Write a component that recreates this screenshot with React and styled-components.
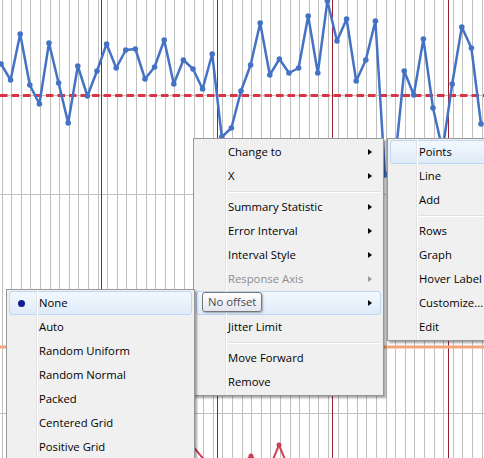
import React from "react";
import styled, { createGlobalStyle, css } from "styled-components";

const GlobalStyle = createGlobalStyle`
  html, body {
    margin: 0;
    padding: 0;
    background: #fff;
  }
  body {
    font-family: "Open Sans", "Liberation Sans", sans-serif;
  }
`;

const Screen = styled.div`
  position: relative;
  width: 484px;
  height: 458px;
  overflow: hidden;
  background: #fff;
`;

const Plot = styled.svg`
  display: block;
`;

const Popup = styled.div`
  position: absolute;
  left: ${(p) => p.$left}px;
  top: ${(p) => p.$top}px;
  width: ${(p) => p.$width}px;
  box-sizing: border-box;
  padding: 1px 2px;
  background: #f0f0f0;
  border: 1px solid #979797;
  box-shadow: 2px 2px 2px rgba(0, 0, 0, 0.35);
  font-size: 11.3px;
  color: #000;

  &::before {
    content: "";
    position: absolute;
    top: 0;
    bottom: 0;
    left: ${(p) => p.$gutter - 1}px;
    width: 1px;
    background: #e2e3e3;
    border-right: 1px solid #fff;
  }
`;

const Item = styled.div`
  display: flex;
  align-items: center;
  height: 24px;
  box-sizing: border-box;
  border: 1px solid transparent;
  border-radius: 3px;
  color: ${(p) => (p.$disabled ? "#8d8d8d" : "#000")};
  ${(p) =>
    p.$active &&
    css`
      border-color: #bcd8f6;
      background: linear-gradient(#f3f8fe, #dfebf9);
    `}
`;

const Gutter = styled.span`
  flex: 0 0 ${(p) => p.$w}px;
  display: flex;
  align-items: center;
  justify-content: center;
  padding-right: 4px;
  box-sizing: border-box;
`;

const Bullet = styled.span`
  width: 7px;
  height: 7px;
  border-radius: 50%;
  background: #101c8f;
`;

const Label = styled.span`
  flex: 1;
  padding-left: 3px;
  padding-bottom: 1px;
  white-space: nowrap;
`;

const Arrow = styled.span`
  width: 0;
  height: 0;
  margin-right: 8px;
  border-left: 4px solid ${(p) => (p.$disabled ? "#9a9a9a" : "#000")};
  border-top: 3.5px solid transparent;
  border-bottom: 3.5px solid transparent;
`;

const Separator = styled.div`
  height: 7px;
  margin-left: ${(p) => p.$gutter - 1}px;
  background: linear-gradient(
    transparent 3px,
    #e0e0e0 3px,
    #e0e0e0 4px,
    #fff 4px,
    #fff 5px,
    transparent 5px
  );
`;

const Tooltip = styled.div`
  position: absolute;
  left: 202px;
  top: 292px;
  height: 20px;
  box-sizing: border-box;
  padding: 0 5px 1px;
  display: flex;
  align-items: center;
  border: 1px solid #767676;
  border-radius: 3px;
  background: linear-gradient(#ffffff, #e4e5f0);
  box-shadow: 1px 1px 2px rgba(0, 0, 0, 0.3);
  color: #4c4c4c;
  font-size: 11.3px;
  white-space: nowrap;
`;

function Menu({ left, top, width, gutter, items }) {
  return (
    <Popup $left={left} $top={top} $width={width} $gutter={gutter}>
      {items.map((it, i) =>
        it === "-" ? (
          <Separator key={i} $gutter={gutter} />
        ) : (
          <Item key={i} $active={it.active} $disabled={it.disabled}>
            <Gutter $w={gutter - 4}>{it.bullet && <Bullet />}</Gutter>
            <Label>{it.label}</Label>
            {it.arrow && <Arrow $disabled={it.disabled} />}
          </Item>
        )
      )}
    </Popup>
  );
}

const STEP = 9.6;
const blueY = [
  64, 80, 34, 85, 104, 43, 83, 123, 66, 96, 71, 44, 68, 50, 49, 79, 67, 40, 84,
  60, 69, 89, 54, 137, 128, 91, 65, 23, 75, 59, 73, 68, 16, 73, 1, 41, 19, 81,
  60, 21, 175, 165, 71, 95, 39, 108, 150, 84, 27, 48, 124,
];
const blue = blueY.map((y, k) => [1 + STEP * k, y]);
const gridX = Array.from({ length: 51 }, (_, k) => Math.round(1.5 + STEP * k) + 0.5);
const redX = [101.5, 217.5, 332.5, 448.5];

function Chart() {
  return (
    <Plot width="484" height="458" viewBox="0 0 484 458">
      <g stroke="#c0c0c0" strokeWidth="1" shapeRendering="crispEdges">
        {gridX.map((x) => (
          <line key={x} x1={x} y1="0" x2={x} y2="458" />
        ))}
        <line x1="0" y1="95.5" x2="484" y2="95.5" />
        <line x1="0" y1="194.5" x2="484" y2="194.5" />
        <line x1="0" y1="413.5" x2="484" y2="413.5" />
      </g>
      <g stroke="#952030" strokeWidth="1" shapeRendering="crispEdges">
        {redX.map((x) => (
          <line key={x} x1={x} y1="0" x2={x} y2="458" />
        ))}
      </g>
      <line x1="0" y1="347" x2="484" y2="347" stroke="#f2a57c" strokeWidth="3" />
      <line
        x1="0"
        y1="95.5"
        x2="484"
        y2="95.5"
        stroke="#da3341"
        strokeWidth="3"
        strokeDasharray="7.5 4"
      />
      <polyline
        points={blue.map((p) => p.join(",")).join(" ")}
        fill="none"
        stroke="#4472c4"
        strokeWidth="2.5"
        strokeLinejoin="round"
      />
      <g fill="#4472c4">
        {blue.map(([x, y]) => (
          <circle key={x} cx={x} cy={y} r="2.8" />
        ))}
      </g>
      <g fill="none" stroke="#cc4058" strokeWidth="2">
        <polyline points="186,438 206,462" />
        <polyline points="244,462 251,456 258,462" />
        <polyline points="272,462 279,445 286,462" />
      </g>
      <g fill="#cc4058">
        <circle cx="251" cy="456" r="2.5" />
        <circle cx="279" cy="445" r="2.5" />
      </g>
    </Plot>
  );
}

const mainItems = [
  { label: "Change to", arrow: true },
  { label: "X", arrow: true },
  "-",
  { label: "Summary Statistic", arrow: true },
  { label: "Error Interval", arrow: true },
  { label: "Interval Style", arrow: true },
  { label: "Response Axis", arrow: true, disabled: true },
  { label: "", arrow: true, active: true },
  { label: "Jitter Limit" },
  "-",
  { label: "Move Forward" },
  { label: "Remove" },
];

const changeItems = [
  { label: "Points", active: true },
  { label: "Line" },
  { label: "Add" },
  "-",
  { label: "Rows" },
  { label: "Graph" },
  { label: "Hover Label" },
  { label: "Customize..." },
  { label: "Edit" },
];

const jitterItems = [
  { label: "None", active: true, bullet: true },
  { label: "Auto" },
  { label: "Random Uniform" },
  { label: "Random Normal" },
  { label: "Packed" },
  { label: "Centered Grid" },
  { label: "Positive Grid" },
];

export default function App() {
  return (
    <Screen>
      <GlobalStyle />
      <Chart />
      <Menu left={193} top={138} width={191} gutter={32} items={mainItems} />
      <Menu left={387} top={138} width={124} gutter={29} items={changeItems} />
      <Menu left={6} top={289} width={189} gutter={30} items={jitterItems} />
      <Tooltip>No offset</Tooltip>
    </Screen>
  );
}
